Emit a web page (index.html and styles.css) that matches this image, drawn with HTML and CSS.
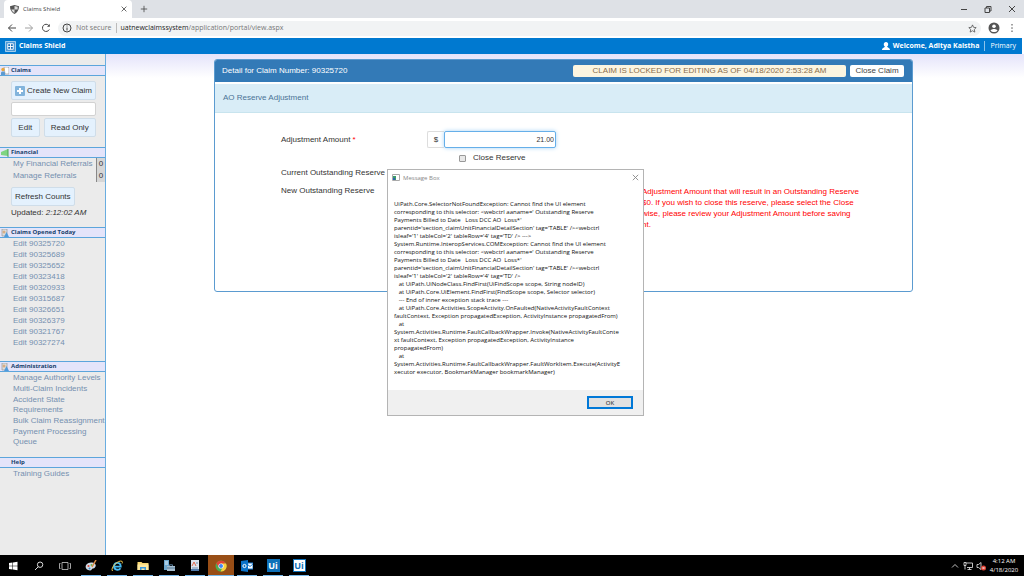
FILE: index.html
```html
<!doctype html>
<html lang="en">
    <head>
        <title>Claims Shield</title>
        <meta charset="utf-8">
        <meta name="viewport" content="width=device-width, initial-scale=1">
        <link rel="stylesheet" href="styles.css">
    </head>
    <body>
        <header class="browser">
            <div class="tabs">
                <div class="tab">
                    <svg class="favicon" viewBox="0 0 10 10"><path d="M0 1.500L5 0l5 1.500C10 6 8 8.500 5 10 2 8.500 0 6 0 1.500z" fill="#555"/><path d="M5 1l3.500 1v3L5 5zM5 5v4C3 7.500 2 6.500 1.500 5z" fill="#ddd"/></svg>
                    <span class="tab-title">Claims Shield</span>
                    <button class="icon-button" aria-label="Close tab"><svg viewBox="0 0 10 10"><path d="M2 2l6 6M8 2L2 8"/></svg></button>
                </div>
                <button class="icon-button new-tab" aria-label="New tab"><svg viewBox="0 0 10 10"><path d="M5 1v8M1 5h8"/></svg></button>
                <div class="window-buttons">
                    <button class="icon-button" aria-label="Minimize"><svg viewBox="0 0 10 10"><path d="M2 5.500h6"/></svg></button>
                    <button class="icon-button" aria-label="Restore"><svg viewBox="0 0 10 10"><path d="M2 4h4.500v4.500H2zM3.500 4V2.500H8V7H6.500"/></svg></button>
                    <button class="icon-button" aria-label="Close"><svg viewBox="0 0 10 10"><path d="M2 2l6 6M8 2L2 8"/></svg></button>
                </div>
            </div>
            <div class="toolbar">
                <button class="icon-button" aria-label="Back"><svg viewBox="0 0 10 10"><path d="M9 5H1.500M5 1.500L1.500 5 5 8.500"/></svg></button>
                <button class="icon-button faded" aria-label="Forward"><svg viewBox="0 0 10 10"><path d="M1 5h7.500M5 1.500L8.500 5 5 8.500"/></svg></button>
                <button class="icon-button" aria-label="Reload"><svg viewBox="0 0 10 10"><path d="M8.300 6.500A3.600 3.600 0 1 1 7.800 2.500"/><path d="M8.800 1v2.800H6z" fill="#444" stroke="none"/></svg></button>
                <div class="address">
                    <svg class="info" viewBox="0 0 10 10"><circle cx="5" cy="5" r="4"/><path d="M5 4.500v3M5 2.500v1"/></svg>
                    <span class="insecure">Not secure</span>
                    <span class="url"><b>uatnewclaimssystem</b>/application/portal/view.aspx</span>
                    <button class="icon-button star" aria-label="Bookmark"><svg viewBox="0 0 10 10"><path d="M5 1l1.200 2.700 2.900.3L7 6l.6 3L5 7.500 2.400 9 3 6 .9 4l2.900-.3z"/></svg></button>
                </div>
                <button class="icon-button profile" aria-label="Profile"><svg viewBox="0 0 12 12"><circle cx="6" cy="6" r="5.500" fill="#555" stroke="none"/><circle cx="6" cy="4.300" r="1.800" fill="#fff" stroke="none"/><path d="M2.500 8.500C4 6.500 8 6.500 9.500 8.500 8 10.500 4 10.500 2.500 8.500z" fill="#fff" stroke="none"/></svg></button>
                <button class="icon-button" aria-label="Menu"><svg viewBox="0 0 10 10"><path d="M5 1v1.500M5 4.300v1.500M5 7.500V9"/></svg></button>
            </div>
        </header>

        <div class="app-bar">
            <svg class="app-logo" viewBox="0 0 12 12"><path d="M.5.5h11v11H.5z" fill="#4d9ad8" stroke="#b4d5ee"/><path d="M3 3h6v6H3zM3 6h6M6 3v6" fill="#1b6db5" stroke="#fff"/></svg>
            <strong>Claims Shield</strong>
            <div class="user">
                <svg class="user-icon" viewBox="0 0 8 8"><path d="M4 0c3 0 2.500 4 1 4.800C5.500 5.800 8 5.800 8 8H0c0-2.200 2.500-2.200 3-3.200C1.500 4 1 0 4 0z" fill="#fff"/></svg>
                <strong>Welcome, Aditya Kaistha</strong>
                <span class="role">Primary</span>
            </div>
        </div>

        <div class="page">
            <nav class="sidebar">
                <section class="group">
                    <h2><svg viewBox="0 0 8 8"><path d="M3 0h4l1 1v6H4z" fill="#fff" stroke="#999" stroke-width=".7"/><circle cx="2" cy="2.500" r="1.700" fill="#e9a63c"/><path d="M0 8V5.500C0 4 4 4 4 5.500V8z" fill="#5d9ad0"/></svg>Claims</h2>
                    <div class="tools">
                        <button class="btn wide"><svg viewBox="0 0 10 10"><rect width="10" height="10" rx="1" fill="#82b4dc"/><path d="M5 2v6M2 5h6" stroke="#fff" stroke-width="2"/></svg>Create New Claim</button>
                        <input class="claim-number" type="text" aria-label="Claim number">
                        <div class="pair">
                            <button class="btn">Edit</button>
                            <button class="btn">Read Only</button>
                        </div>
                    </div>
                </section>
                <section class="group">
                    <h2><svg viewBox="0 0 8 8"><path d="M0 3l7-3v7L0 6z" fill="#7fd482"/><path d="M7 0v8" stroke="#4aa653"/></svg>Financial</h2>
                    <ul class="counts">
                        <li><a href="#">My Financial Referrals</a><span>0</span></li>
                        <li><a href="#">Manage Referrals</a><span>0</span></li>
                    </ul>
                    <div class="tools">
                        <button class="btn">Refresh Counts</button>
                        <div class="updated">Updated: <i>2:12:02 AM</i></div>
                    </div>
                </section>
                <section class="group opened">
                    <h2><svg viewBox="0 0 8 8"><path d="M1 0h5v7H1z" fill="#ddd" stroke="#999" stroke-width=".7"/><circle cx="3" cy="3" r="1.500" fill="#d8ad84"/><path d="M3 8l2.500-5L8 8z" fill="#4f9bdc"/></svg>Claims Opened Today</h2>
                    <ul class="links">
                        <li><a href="#">Edit 90325720</a></li>
                        <li><a href="#">Edit 90325689</a></li>
                        <li><a href="#">Edit 90325652</a></li>
                        <li><a href="#">Edit 90323418</a></li>
                        <li><a href="#">Edit 90320933</a></li>
                        <li><a href="#">Edit 90315687</a></li>
                        <li><a href="#">Edit 90326651</a></li>
                        <li><a href="#">Edit 90326379</a></li>
                        <li><a href="#">Edit 90321767</a></li>
                        <li><a href="#">Edit 90327274</a></li>
                    </ul>
                </section>
                <section class="group">
                    <h2><svg viewBox="0 0 8 8"><path d="M1 0h5v7H1z" fill="#ddd" stroke="#999" stroke-width=".7"/><circle cx="3" cy="3" r="1.500" fill="#d8ad84"/><path d="M3 8l2.500-5L8 8z" fill="#4f9bdc"/></svg>Administration</h2>
                    <ul class="links">
                        <li><a href="#">Manage Authority Levels</a></li>
                        <li><a href="#">Multi-Claim Incidents</a></li>
                        <li><a href="#">Accident State<br>Requirements</a></li>
                        <li><a href="#">Bulk Claim Reassignment</a></li>
                        <li><a href="#">Payment Processing<br>Queue</a></li>
                    </ul>
                </section>
                <section class="group">
                    <h2 class="no-icon">Help</h2>
                    <ul class="links">
                        <li><a href="#">Training Guides</a></li>
                    </ul>
                </section>
            </nav>

            <main class="content">
                <div class="panel">
                    <div class="panel-heading">
                        <h1>Detail for Claim Number: 90325720</h1>
                        <div class="locked">CLAIM IS LOCKED FOR EDITING AS OF 04/18/2020 2:53:28 AM</div>
                        <button class="close-claim">Close Claim</button>
                    </div>
                    <div class="panel-subheading">AO Reserve Adjustment</div>
                    <form class="adjustment">
                        <label for="amount">Adjustment Amount <span class="required">*</span></label>
                        <div class="input-group">
                            <span class="addon">$</span>
                            <input id="amount" type="text" value="21.00">
                        </div>
                        <div class="check">
                            <input id="closeReserve" type="checkbox">
                            <label for="closeReserve">Close Reserve</label>
                        </div>
                        <div class="row-label">Current Outstanding Reserve</div>
                        <div class="row-label">New Outstanding Reserve</div>
                        <p class="warning">Adjustment Amount that will result in an Outstanding Reserve<br>$0. If you wish to close this reserve, please select the Close<br>wise, please review your Adjustment Amount before saving<br>nt.</p>
                    </form>
                </div>
            </main>
        </div>

        <div class="dialog" role="dialog" aria-labelledby="dialogTitle">
            <div class="dialog-title">
                <svg viewBox="0 0 8 7"><path d="M.5.5h7v6h-7z" fill="#fff" stroke="#aaa"/><path d="M1 2h3v4H1z" fill="#3c9a6b"/><path d="M1 4h2v2H1z" fill="#2c62b0"/></svg>
                <span id="dialogTitle">Message Box</span>
                <button class="icon-button" aria-label="Close"><svg viewBox="0 0 10 10"><path d="M2 2l6 6M8 2L2 8"/></svg></button>
            </div>
<pre class="trace">UiPath.Core.SelectorNotFoundException: Cannot find the UI element
corresponding to this selector: &lt;webctrl aaname=' Outstanding Reserve
Payments Billed to Date   Loss DCC AO  Loss*'
parentid='section_claimUnitFinancialDetailSection' tag='TABLE' /&gt;&lt;webctrl
isleaf='1' tableCol='2' tableRow='4' tag='TD' /&gt; ---&gt;
System.Runtime.InteropServices.COMException: Cannot find the UI element
corresponding to this selector: &lt;webctrl aaname=' Outstanding Reserve
Payments Billed to Date   Loss DCC AO  Loss*'
parentid='section_claimUnitFinancialDetailSection' tag='TABLE' /&gt;&lt;webctrl
isleaf='1' tableCol='2' tableRow='4' tag='TD' /&gt;
   at UiPath.UiNodeClass.FindFirst(UiFindScope scope, String nodeID)
   at UiPath.Core.UiElement.FindFirst(FindScope scope, Selector selector)
   --- End of inner exception stack trace ---
   at UiPath.Core.Activities.ScopeActivity.OnFaulted(NativeActivityFaultContext
faultContext, Exception propagatedException, ActivityInstance propagatedFrom)
   at
System.Activities.Runtime.FaultCallbackWrapper.Invoke(NativeActivityFaultConte
xt faultContext, Exception propagatedException, ActivityInstance
propagatedFrom)
   at
System.Activities.Runtime.FaultCallbackWrapper.FaultWorkItem.Execute(ActivityE
xecutor executor, BookmarkManager bookmarkManager)</pre>
            <div class="dialog-footer">
                <button class="ok">OK</button>
            </div>
        </div>

        <footer class="taskbar">
            <button aria-label="Start"><svg viewBox="0 0 12 12"><path d="M2 3l3.500-.5v3.200H2zM6 2.400l4.500-.6v3.900H6zM2 6.300h3.500v3.200L2 9zM6 6.300h4.500v3.900L6 9.600z" fill="#fff"/></svg></button>
            <button aria-label="Search"><svg viewBox="0 0 12 12"><path d="M5.200 6.800L2 10M9.800 4.700a2.700 2.700 0 1 1-5.400 0 2.700 2.700 0 0 1 5.400 0z" fill="none" stroke="#ddd"/></svg></button>
            <button aria-label="Task view"><svg viewBox="0 0 12 12"><path d="M3 2.500h6v7H3zM1.500 3.500h-1v5h1M10.500 3.500h1v5h-1" fill="none" stroke="#ccc" stroke-width=".8"/></svg></button>
            <button class="open" aria-label="Paint"><svg viewBox="0 0 12 12"><path d="M6 2.500c7 0 5 6 2 6-1.500 0-1 2-3 2C-1 10-1 3 6 2.500z" fill="#cfdce7"/><circle cx="3.500" cy="6" r="1.100" fill="#d94b3d"/><circle cx="4.500" cy="8.500" r="1" fill="#3e8dd0"/><circle cx="6.500" cy="5" r="1" fill="#6bb04b"/><path d="M11 0L7 7" stroke="#d98a45" stroke-width="1.500"/></svg></button>
            <button class="open" aria-label="Internet Explorer"><svg viewBox="0 0 12 12"><path d="M9.500 8.200C7.500 11 3 9.800 3 6.300c0-4.600 6.700-4.600 6.700.3H3.500" fill="none" stroke="#45b9f0" stroke-width="1.900"/><path d="M1.500 11C-1 8 7-.5 11 1.300c.7.500.4 1.500 0 2.200" fill="none" stroke="#f1c84b"/></svg></button>
            <button class="open" aria-label="File Explorer"><svg viewBox="0 0 12 12"><path d="M.5 2h4l1 1h6v7H.5z" fill="#f7d774"/><path d="M.5 4.500h11V10H.5z" fill="#ffe9a0"/><path d="M3 10V7h6v3H7.500V8.500h-3V10z" fill="#3d9be0"/></svg></button>
            <button class="open" aria-label="Server Manager"><svg viewBox="0 0 12 12"><path d="M1 0h5v10H1z" fill="#6ea8cf"/><path d="M2 2h3M2 4h3" stroke="#e4f1f9"/><path d="M4 6h8v5H4z" fill="#a7bfd0"/><path d="M6.500 6V4.800h3V6M4 8h8" fill="none" stroke="#557b98"/></svg></button>
            <button class="open" aria-label="Document"><svg viewBox="0 0 12 12"><path d="M2 0h8v11H2z" fill="#d9e3ee"/><path d="M3 6l2-4 2 4" fill="none" stroke="#de684d"/><path d="M7 3h2M3 8h6" stroke="#6c8bad"/><path d="M2 9h8v2H2z" fill="#517bab"/></svg></button>
            <button class="open active" aria-label="Chrome"><svg viewBox="0 0 12 12"><circle cx="6" cy="6" r="5.500" fill="#4cae50"/><path d="M1.200 3.200A5.500 5.500 0 0 1 10.800 3.200L6 6 3.800 7.500z" fill="#e34234"/><path d="M6 3.500h5A5.500 5.500 0 0 1 5.500 11.500L8 7z" fill="#fbcf3b"/><circle cx="6" cy="6" r="2.600" fill="#fff"/><circle cx="6" cy="6" r="2" fill="#4285f4"/></svg></button>
            <button class="open" aria-label="Outlook"><svg viewBox="0 0 12 12"><path d="M6 3h6v6H6z" fill="#fff"/><path d="M6 4l3 2.500L12 4M6 9h6V3H6" fill="none" stroke="#1b7bd0"/><path d="M0 1l7-1v12l-7-1z" fill="#0a72c9"/><circle cx="3.500" cy="6" r="1.600" fill="none" stroke="#fff"/></svg></button>
            <button class="open" aria-label="UiPath Studio"><span class="ui-logo">Ui</span></button>
            <button class="open" aria-label="UiPath Robot"><span class="ui-logo light">Ui</span></button>
            <div class="tray">
                <svg viewBox="0 0 10 10"><path d="M2 6.500l3-3 3 3"/></svg>
                <svg viewBox="0 0 10 10"><path d="M3 2h6.500v4.500H4M6.500 6.500v2M4.500 8.500h4M1 1.500h2v3H1zM2 4.500v4"/></svg>
                <svg viewBox="0 0 10 10"><path d="M1 3.500h1.500L5 1.500v7L2.500 6.500H1z"/><circle cx="7.500" cy="7" r="2.500" fill="#e04335" stroke="none"/><path d="M6.500 6l2 2M8.500 6l-2 2"/></svg>
                <div class="clock">4:12 AM<br>4/18/2020</div>
            </div>
        </footer>
    </body>
</html>
```

FILE: styles.css
```css
* {
    box-sizing: border-box;
}
body {
    margin: 0;
    min-height: 100vh;
    display: flex;
    flex-direction: column;
    position: relative;
    background: #fff;
    color: #333;
    font: 8px/10px "Liberation Sans", Arial, sans-serif;
}
button, input {
    margin: 0;
    padding: 0;
    border: 0;
    font: inherit;
    color: inherit;
}
ul, h1, h2, p, pre {
    margin: 0;
    padding: 0;
    font: inherit;
    list-style: none;
}
a {
    color: #7590b0;
    text-decoration: none;
}

/* browser window */
.icon-button {
    display: flex;
    background: none;
}
.icon-button svg, .info {
    width: 10px;
    height: 10px;
    fill: none;
    stroke: #444;
}
.faded {
    opacity: 0.5;
}
.tabs {
    display: flex;
    align-items: center;
    height: 18px;
    padding-left: 4px;
    background: #dee1e6;
}
.tab {
    display: flex;
    align-items: center;
    gap: 4px;
    width: 128px;
    height: 18px;
    padding: 0 4px 0 6px;
    border-radius: 4px 4px 0 0;
    background: #fff;
}
.favicon {
    width: 9px;
    height: 9px;
}
.tab-title {
    flex: 1;
    font: 6px/10px "Open Sans", sans-serif;
    color: #444;
}
.tab .icon-button svg {
    width: 8px;
    height: 8px;
}
.new-tab {
    margin-left: 8px;
}
.new-tab svg {
    width: 8px;
    height: 8px;
}
.window-buttons {
    display: flex;
    gap: 14px;
    margin-left: auto;
    padding-right: 7px;
}
.toolbar {
    display: flex;
    align-items: center;
    gap: 7px;
    height: 20px;
    padding: 0 7px;
    background: #fff;
}
.address {
    flex: 1;
    display: flex;
    align-items: center;
    height: 15px;
    padding: 0 4px;
    border-radius: 8px;
    background: #f1f3f4;
    font: 7px/10px "Open Sans", sans-serif;
    color: #777;
}
.info {
    margin-right: 4px;
}
.insecure {
    padding-right: 4px;
    margin-right: 4px;
    border-right: 1px solid #bbb;
}
.url b {
    font-weight: normal;
    color: #222;
}
.star {
    margin-left: auto;
}
.star svg {
    width: 9px;
    height: 9px;
    stroke-width: 0.8;
}
.profile svg {
    width: 12px;
    height: 12px;
}

/* application header */
.app-bar {
    display: flex;
    align-items: center;
    gap: 3px;
    height: 16px;
    margin-right: 2px;
    padding: 0 6px 0 5px;
    background: #0079d0;
    color: #fff;
    font: 7px/10px "Open Sans", sans-serif;
}
.app-logo {
    width: 11px;
    height: 11px;
}
.user {
    display: flex;
    align-items: center;
    gap: 3px;
    margin-left: auto;
}
.user-icon {
    width: 8px;
    height: 8px;
}
.role {
    margin-left: 2px;
    padding-left: 5px;
    border-left: 1px solid #8cc3ea;
}

.page {
    flex: 1;
    display: flex;
}

/* sidebar */
.sidebar {
    flex: none;
    width: 106px;
    padding-top: 11px;
    border-right: 1px solid #69ade0;
    background: #ebebeb;
}
.group {
    margin-bottom: 10px;
}
.opened {
    margin-bottom: 13px;
}
.group h2 {
    display: flex;
    align-items: center;
    gap: 2px;
    height: 11px;
    padding-left: 1px;
    border-top: 1px solid #5ca5dc;
    border-bottom: 1px solid #5ca5dc;
    background: #e4e4fa;
    color: #17406b;
    font: bold 6px/9px "Open Sans", sans-serif;
}
.group h2 svg {
    width: 8px;
    height: 8px;
}
.group h2.no-icon {
    padding-left: 11px;
}
.tools {
    display: flex;
    flex-direction: column;
    align-items: flex-start;
    gap: 2px;
    padding: 5px 9px 0 11px;
}
.btn {
    display: flex;
    align-items: center;
    justify-content: center;
    gap: 2px;
    height: 19px;
    padding: 0 3px;
    border: 1px solid #cfdde9;
    border-radius: 2px;
    background: #e4f1fd;
    white-space: nowrap;
}
.btn svg {
    flex: none;
    width: 10px;
    height: 10px;
}
.wide {
    width: 100%;
}
.claim-number {
    width: 100%;
    height: 14px;
    border: 1px solid #d2d2d2;
    border-radius: 2px;
    background: #fff;
}
.pair {
    display: flex;
    gap: 4px;
    width: 100%;
}
.pair .btn {
    flex: 1 0 auto;
}
.counts li {
    display: flex;
    justify-content: space-between;
    padding-left: 13px;
    line-height: 12px;
}
.counts span {
    width: 9px;
    border-left: 1px solid #888;
    background: #d6d6d6;
    text-align: center;
}
.updated {
    line-height: 9px;
}
.links {
    display: flex;
    flex-direction: column;
    gap: 1px;
    padding: 1px 0 0 13px;
}

/* claim panel */
.content {
    flex: 1;
    padding: 5px 111px 0 108px;
    background: linear-gradient(#e4e3fa, #fff 24px);
}
.panel {
    min-height: 233px;
    border: 1px solid #5b9bd0;
    border-radius: 3px;
    background: #fff;
}
.panel-heading {
    display: flex;
    align-items: center;
    gap: 4px;
    height: 22px;
    padding: 0 8px 0 7px;
    border-radius: 2px 2px 0 0;
    background: #337ab7;
    color: #fff;
}
.panel-heading h1 {
    flex: 1;
}
.locked {
    width: 273px;
    border-radius: 2px;
    background: #fcf5e0;
    color: #8a6d4b;
    line-height: 12px;
    text-align: center;
}
.close-claim {
    width: 54px;
    height: 12px;
    border-radius: 2px;
    background: #fff;
    color: #444;
}
.panel-subheading {
    margin-top: 2px;
    padding: 9px 8px;
    border-bottom: 1px solid #c8e4ee;
    background: #d9edf7;
    color: #4a7396;
}
.adjustment {
    display: grid;
    grid-template-columns: 146px 215px 1fr;
    align-items: center;
    padding: 18px 0 0 66px;
}
.required {
    color: red;
}
.input-group {
    display: flex;
    width: 129px;
    height: 17px;
}
.addon {
    width: 17px;
    border: 1px solid #ddd;
    border-right: 0;
    border-radius: 2px 0 0 2px;
    line-height: 15px;
    text-align: center;
}
.input-group input {
    flex: 1;
    min-width: 0;
    padding-right: 1px;
    border: 1px solid #66afe9;
    border-radius: 2px;
    box-shadow: 0 0 4px #a8d3f5;
    font-size: 7px;
    text-align: right;
}
.check {
    grid-column: 2;
    display: flex;
    align-items: center;
    gap: 7px;
    height: 20px;
    padding-left: 32px;
}
.check input {
    appearance: none;
    width: 7px;
    height: 7px;
    border: 1px solid #999;
    border-radius: 1px;
    background: #e8e8e8;
}
.check input:checked {
    background: #337ab7;
}
.row-label {
    grid-column: 1;
    height: 18px;
}
.warning {
    grid-column: 3;
    height: 18px;
    color: red;
    line-height: 11px;
    white-space: nowrap;
}

/* message box */
.dialog {
    position: absolute;
    top: 169px;
    left: 387px;
    width: 257px;
    border: 1px solid #b4b4b4;
    background: #fff;
    color: #111;
    font: 6px/8px "Open Sans", sans-serif;
}
.dialog-title {
    display: flex;
    align-items: center;
    gap: 3px;
    height: 15px;
    padding: 0 3px 0 4px;
    color: #888;
}
.dialog-title > svg {
    width: 8px;
    height: 7px;
}
.dialog-title .icon-button {
    margin-left: auto;
}
.dialog-title .icon-button svg {
    width: 9px;
    height: 9px;
    stroke: #888;
}
.trace {
    padding: 15px 6px 14px;
}
.dialog-footer {
    display: flex;
    justify-content: flex-end;
    padding: 6px 10px;
    background: #f0f0f0;
}
.ok {
    width: 46px;
    height: 13px;
    border: 2px solid #0078d7;
    background: #e1e1e1;
}

/* taskbar */
.taskbar {
    display: flex;
    height: 21px;
    background: #000;
    color: #fff;
}
.taskbar button {
    display: flex;
    align-items: center;
    justify-content: center;
    width: 26px;
    background: none;
}
.taskbar button svg {
    width: 12px;
    height: 12px;
}
.taskbar .open {
    background: linear-gradient(#76b9ed, #76b9ed) center bottom / 20px 1px no-repeat;
}
.taskbar .active {
    background-color: #984e16;
    background-size: 26px 1px;
}
.ui-logo {
    width: 13px;
    border: 1px solid #0e70b8;
    background: #0e70b8;
    color: #fff;
    font: bold 9px/11px "Open Sans", sans-serif;
    text-align: center;
}
.light {
    background: #fff;
    color: #0e70b8;
}
.tray {
    display: flex;
    align-items: center;
    gap: 3px;
    margin-left: auto;
    padding-right: 5px;
}
.tray svg {
    width: 10px;
    height: 10px;
    fill: none;
    stroke: #eee;
    stroke-width: 0.8;
}
.clock {
    width: 30px;
    font: 6px/9px "Open Sans", sans-serif;
    text-align: center;
}
```
